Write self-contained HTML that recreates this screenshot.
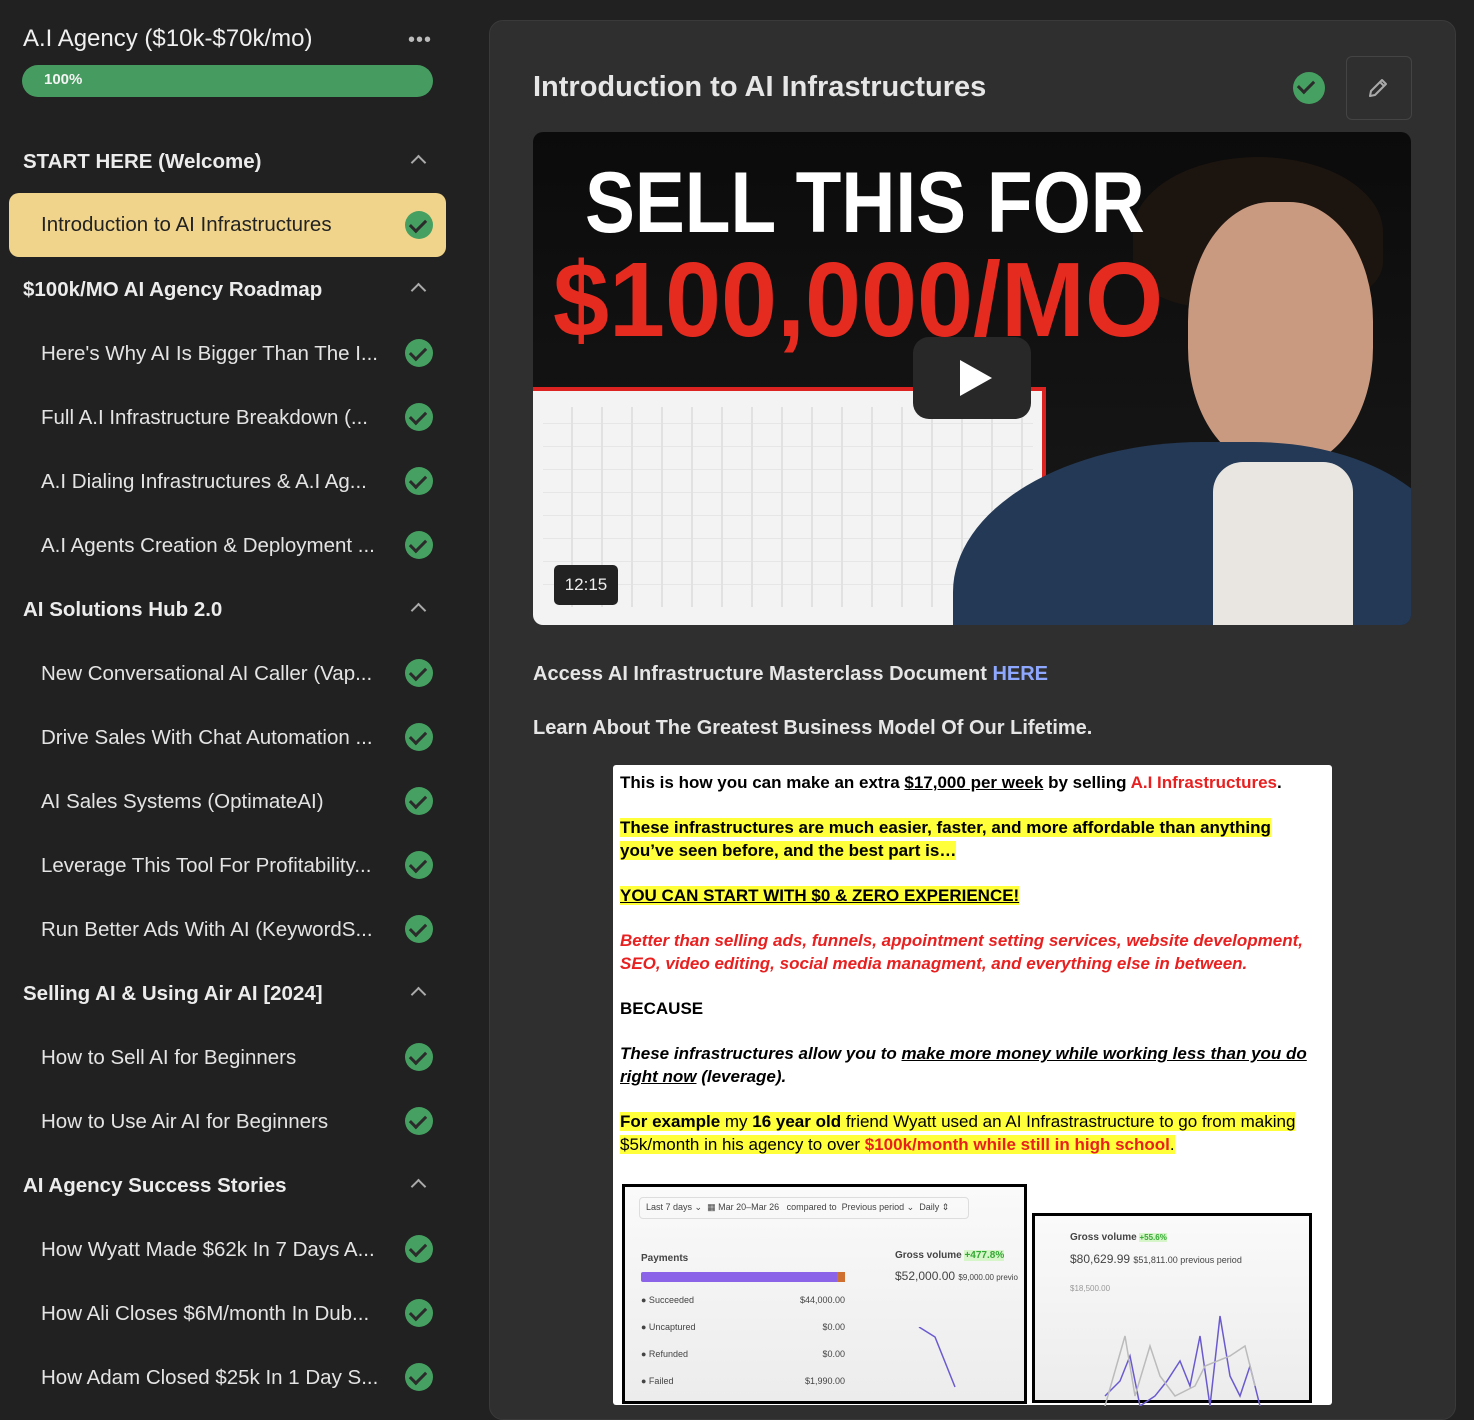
<!DOCTYPE html>
<html><head><meta charset="utf-8"><style>
*{margin:0;padding:0;box-sizing:border-box}
body{width:1474px;height:1392px;background:#212121;font-family:"Liberation Sans",Arial,sans-serif;overflow:hidden;position:relative;color:#e8e8e8}
.a{position:absolute}
.sec{position:absolute;left:23px;font-size:20.5px;font-weight:bold;color:#ececec}
.chev{position:absolute;left:413px;width:11px;height:11px;border-left:2.5px solid #aaa;border-top:2.5px solid #aaa;transform:rotate(45deg)}
.it{position:absolute;left:41px;font-size:20.5px;color:#e4e4e4;white-space:nowrap}
.ck{position:absolute;left:405px;width:28px;height:28px;border-radius:50%;background:#46a061}
.ck:after{content:"";position:absolute;left:8px;top:5px;width:7px;height:13px;border-right:3px solid #2b2b2b;border-bottom:3px solid #2b2b2b;transform:rotate(45deg)}
.doc{position:absolute;left:613px;top:765px;width:719px;height:640px;background:#fff;color:#000;font-size:17px;font-weight:bold;line-height:23px;padding:6px 7px;border-radius:3px}
.doc p{margin-bottom:22px}
.hl{background:#ffff3a}
.red{color:#e82020}
u{text-decoration:underline}
</style></head><body>
<div class="a" style="left:23px;top:25px;font-size:24px;color:#f0f0f0">A.I Agency ($10k-$70k/mo)</div>
<div class="a" style="left:408px;top:29px;font-size:20px;color:#bbb;letter-spacing:1px">•••</div>
<div class="a" style="left:22px;top:65px;width:411px;height:32px;border-radius:16px;background:#469c60"></div>
<div class="a" style="left:44px;top:71px;font-size:15px;font-weight:bold;color:#f3f3f3">100%</div>

<div class="sec" style="top:150px">START HERE (Welcome)</div><div class="chev" style="top:157px"></div>
<div class="a" style="left:9px;top:193px;width:437px;height:64px;border-radius:10px;background:#f0d48b"></div>
<div class="it" style="top:213px;color:#222">Introduction to AI Infrastructures</div><div class="ck" style="top:211px"></div>

<div class="sec" style="top:278px">$100k/MO AI Agency Roadmap</div><div class="chev" style="top:285px"></div>
<div class="it" style="top:342px">Here's Why AI Is Bigger Than The I...</div><div class="ck" style="top:339px"></div>
<div class="it" style="top:406px">Full A.I Infrastructure Breakdown (...</div><div class="ck" style="top:403px"></div>
<div class="it" style="top:470px">A.I Dialing Infrastructures &amp; A.I Ag...</div><div class="ck" style="top:467px"></div>
<div class="it" style="top:534px">A.I Agents Creation &amp; Deployment ...</div><div class="ck" style="top:531px"></div>

<div class="sec" style="top:598px">AI Solutions Hub 2.0</div><div class="chev" style="top:605px"></div>
<div class="it" style="top:662px">New Conversational AI Caller (Vap...</div><div class="ck" style="top:659px"></div>
<div class="it" style="top:726px">Drive Sales With Chat Automation ...</div><div class="ck" style="top:723px"></div>
<div class="it" style="top:790px">AI Sales Systems (OptimateAI)</div><div class="ck" style="top:787px"></div>
<div class="it" style="top:854px">Leverage This Tool For Profitability...</div><div class="ck" style="top:851px"></div>
<div class="it" style="top:918px">Run Better Ads With AI (KeywordS...</div><div class="ck" style="top:915px"></div>

<div class="sec" style="top:982px">Selling AI &amp; Using Air AI [2024]</div><div class="chev" style="top:989px"></div>
<div class="it" style="top:1046px">How to Sell AI for Beginners</div><div class="ck" style="top:1043px"></div>
<div class="it" style="top:1110px">How to Use Air AI for Beginners</div><div class="ck" style="top:1107px"></div>

<div class="sec" style="top:1174px">AI Agency Success Stories</div><div class="chev" style="top:1181px"></div>
<div class="it" style="top:1238px">How Wyatt Made $62k In 7 Days A...</div><div class="ck" style="top:1235px"></div>
<div class="it" style="top:1302px">How Ali Closes $6M/month In Dub...</div><div class="ck" style="top:1299px"></div>
<div class="it" style="top:1366px">How Adam Closed $25k In 1 Day S...</div><div class="ck" style="top:1363px"></div>

<!-- main panel -->
<div class="a" style="left:489px;top:20px;width:967px;height:1400px;background:#2f2f2f;border:1px solid #3a3a3a;border-radius:14px"></div>
<div class="a" style="left:533px;top:71px;font-size:29px;font-weight:bold;color:#e6e6e6">Introduction to AI Infrastructures</div>
<div class="ck" style="left:1293px;top:72px;width:32px;height:32px"></div>
<div class="a" style="left:1346px;top:56px;width:66px;height:64px;border:1px solid #444;border-radius:6px"></div>
<svg class="a" style="left:1366px;top:76px" width="24" height="24" viewBox="0 0 24 24"><path d="M4 20l1-5L16 4l4 4L9 19z M14 6l4 4" fill="none" stroke="#aaa" stroke-width="2" stroke-linejoin="round"/></svg>

<!-- video -->
<div class="a" style="left:533px;top:132px;width:878px;height:493px;border-radius:10px;overflow:hidden;background:linear-gradient(#0b0b0b,#1a1a1a)">
  <div class="a" style="left:0;top:255px;width:513px;height:240px;background:#f3f3f3;border-top:4px solid #d22;border-right:4px solid #d22"></div>
  <div class="a" style="left:10px;top:275px;width:490px;height:200px;background:repeating-linear-gradient(90deg,transparent 0 28px,#d6d6d6 28px 30px),repeating-linear-gradient(0deg,transparent 0 22px,#dedede 22px 23px);opacity:.6"></div>
  <div class="a" style="left:600px;top:25px;width:250px;height:150px;border-radius:50% 50% 30% 30%;background:#1c140f"></div>
  <div class="a" style="left:655px;top:70px;width:185px;height:265px;border-radius:45%;background:#c99a80"></div>
  <div class="a" style="left:420px;top:310px;width:500px;height:300px;border-radius:50% 40% 0 0;background:#243955"></div>
  <div class="a" style="left:680px;top:330px;width:140px;height:200px;background:#e9e6e2;border-radius:30px 30px 0 0"></div>
  <div class="a" style="left:52px;top:22px;font-size:86px;font-weight:bold;color:#fff;white-space:nowrap;transform:scaleX(.87);transform-origin:left">SELL THIS FOR</div>
  <div class="a" style="left:20px;top:108px;font-size:106px;font-weight:bold;color:#e52a20;white-space:nowrap;transform:scaleX(.95);transform-origin:left;letter-spacing:0px">$100,000/MO</div>
  <div class="a" style="left:380px;top:205px;width:118px;height:82px;border-radius:16px;background:#282828"></div>
  <div class="a" style="left:427px;top:228px;width:0;height:0;border-left:32px solid #fff;border-top:18px solid transparent;border-bottom:18px solid transparent"></div>
  <div class="a" style="left:21px;top:433px;width:64px;height:40px;border-radius:5px;background:#222;color:#eee;font-size:17px;text-align:center;line-height:40px">12:15</div>
</div>

<div class="a" style="left:533px;top:663px;font-size:20px;font-weight:bold;color:#e6e6e6">Access AI Infrastructure Masterclass Document <span style="color:#8fa8ff">HERE</span></div>
<div class="a" style="left:533px;top:717px;font-size:20px;font-weight:bold;color:#e6e6e6">Learn About The Greatest Business Model Of Our Lifetime.</div>

<div class="doc">
<p>This is how you can make an extra <u>$17,000 per week</u> by selling <span class="red">A.I Infrastructures</span>.</p>
<p><span class="hl">These infrastructures are much easier, faster, and more affordable than anything you’ve seen before, and the best part is…</span></p>
<p><span class="hl"><u>YOU CAN START WITH $0 &amp; ZERO EXPERIENCE!</u></span></p>
<p class="red"><i>Better than selling ads, funnels, appointment setting services, website development, SEO, video editing, social media managment, and everything else in between.</i></p>
<p>BECAUSE</p>
<p><i>These infrastructures allow you to <u>make more money while working less than you do right now</u> (leverage).</i></p>
<p style="font-weight:normal"><span class="hl"><b>For example</b> my <b>16 year old</b> friend Wyatt used an AI Infrastrastructure to go from making $5k/month in his agency to over <b class="red">$100k/month while still in high school</b>.</span></p>
</div>
<!-- screenshots -->
<div class="a" style="left:622px;top:1184px;width:405px;height:220px;border:3px solid #000;background:linear-gradient(#fafafa,#ececec);font-size:9px;color:#444">
  <div class="a" style="left:14px;top:10px;width:330px;height:22px;border:1px solid #ddd;border-radius:4px;padding:4px 6px">Last 7 days ⌄ &nbsp;▦ Mar 20–Mar 26 &nbsp; compared to &nbsp;Previous period ⌄ &nbsp;Daily ⇕</div>
  <div class="a" style="left:16px;top:66px;font-weight:bold;font-size:10px">Payments</div>
  <div class="a" style="left:16px;top:85px;width:204px;height:10px;background:#8a63e8;border-radius:2px"><div style="position:absolute;right:0;width:8px;height:10px;background:#d07030"></div></div>
  <div class="a" style="left:16px;top:108px;width:204px">● Succeeded<span style="float:right">$44,000.00</span></div>
  <div class="a" style="left:16px;top:135px;width:204px">● Uncaptured<span style="float:right">$0.00</span></div>
  <div class="a" style="left:16px;top:162px;width:204px">● Refunded<span style="float:right">$0.00</span></div>
  <div class="a" style="left:16px;top:189px;width:204px">● Failed<span style="float:right">$1,990.00</span></div>
  <div class="a" style="left:270px;top:63px;font-weight:bold;font-size:10px">Gross volume <span style="background:#d6f5c8;color:#3a3">+477.8%</span></div>
  <div class="a" style="left:270px;top:82px;font-size:12px;white-space:nowrap">$52,000.00 <span style="font-size:8px">$9,000.00 previo</span></div>
  <svg class="a" style="left:290px;top:140px" width="110" height="70"><polyline points="4,0 20,10 40,60" fill="none" stroke="#6a5ad0" stroke-width="1.5"/></svg>
</div>
<div class="a" style="left:1032px;top:1213px;width:280px;height:190px;border:3px solid #000;background:linear-gradient(#fafafa,#ececec);font-size:10px;color:#444">
  <div class="a" style="left:35px;top:16px;font-weight:bold">Gross volume <span style="background:#d6f5c8;color:#3a3;font-size:8px">+55.6%</span></div>
  <div class="a" style="left:35px;top:36px;font-size:12px;white-space:nowrap">$80,629.99 <span style="font-size:9px">$51,811.00 previous period</span></div>
  <div class="a" style="left:35px;top:68px;font-size:8px;color:#999">$18,500.00</div>
  <svg class="a" style="left:60px;top:70px" width="210" height="120"><polyline points="10,110 25,95 35,70 45,120 60,110 72,95 85,75 95,100 105,50 115,120 125,30 135,90 145,110 155,80 165,120" fill="none" stroke="#6a5ad0" stroke-width="1.5"/><polyline points="10,120 30,50 40,110 55,60 65,90 80,110 100,100 110,80 135,70 150,60 160,100" fill="none" stroke="#bbb" stroke-width="1.5"/></svg>
</div>
</body></html>
